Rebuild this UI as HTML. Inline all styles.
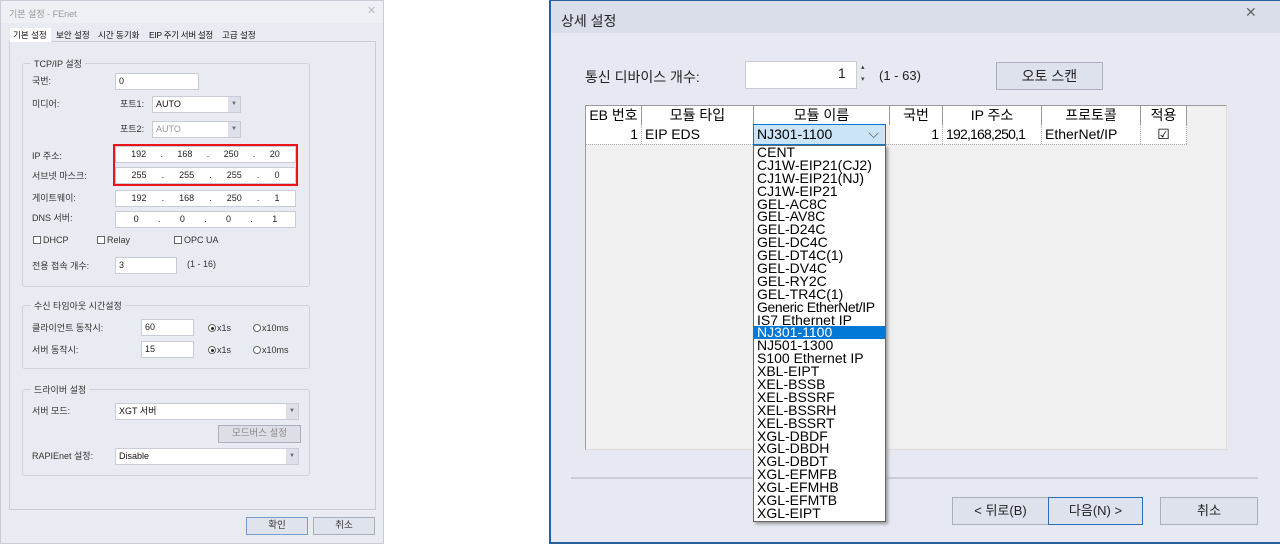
<!DOCTYPE html><html><head><meta charset="utf-8"><style>
*{box-sizing:border-box;margin:0;padding:0}
body{width:1280px;height:544px;background:#fff;position:relative;overflow:hidden;font-family:"Liberation Sans","Noto Sans CJK KR",sans-serif;}
.a{position:absolute}
.l{font-size:9px;color:#333;white-space:nowrap;line-height:11px}
.in{position:absolute;background:#fff;border:1px solid #c8ccd6;font-size:9px;padding:2px 3px;color:#222;line-height:11px}
.grp{position:absolute;border:1px solid #cfd2db;border-radius:3px}
.gt{position:absolute;top:-7px;left:8px;background:#e9ebf2;padding:0 3px;font-size:9px;color:#333}
.sel{position:absolute;background:#fff;border:1px solid #c8ccd6;font-size:9px;padding:2px 3px;color:#111;line-height:11px}
.sel i{position:absolute;right:0;top:0;bottom:0;width:12px;background:#dde0e8;font-style:normal;font-size:6px;text-align:center;line-height:15px;color:#666}
.ip{display:flex;justify-content:space-around;padding:2px 8px}
.btn{position:absolute;background:#dfe3ec;border:1px solid #a9afbd;font-size:9.5px;text-align:center;color:#333}
.R{font-size:14px;color:#222}
.th{position:absolute;top:0;height:19px;border-right:1px solid #999;text-align:center;font-size:14px;line-height:19px;background:#fff}
.td{position:absolute;top:19px;height:19px;border-right:1px dotted #aaa;font-size:14px;line-height:19px;background:#fff;padding:0 3px;white-space:nowrap}
.dd div{height:12.9px;line-height:12.9px;font-size:14px;white-space:nowrap;padding-left:3px;}
.rbtn{position:absolute;background:#dde2ed;border:1px solid #a8aebc;font-size:13px;text-align:center;line-height:26px;color:#222}
.rd{display:inline-block;width:8px;height:8px;border:1px solid #666;border-radius:50%;vertical-align:-1px;margin-right:1px;position:relative;background:#fff}
.rd.on::after{content:"";position:absolute;left:1.5px;top:1.5px;width:3px;height:3px;border-radius:50%;background:#222}
.cb{display:inline-block;width:8px;height:8px;border:1px solid #666;vertical-align:-1px;margin-right:2px;background:#fff}
</style></head><body>
<!-- left dialog -->
<div class="a" style="left:0;top:0;width:384px;height:544px;background:#e9ebf2;border:1px solid #c9ccd6">
 <div class="a" style="left:0;top:0;width:382px;height:22px;background:#eef0f5"></div>
 <div class="a l" style="left:8px;top:8px;color:#999">기본 설정 - FEnet</div>
 <div class="a" style="left:366px;top:3px;color:#bbb;font-size:11px">✕</div>
 <div class="a" style="left:8px;top:40px;width:367px;height:469px;border:1px solid #c9ccd6;background:#e9ebf2"></div>
 <div class="a" style="left:9px;top:27px;width:41px;height:14px;background:#fff"></div>
 <div class="a l" style="left:12px;top:29px;color:#111;font-size:8.5px">기본 설정</div>
 <div class="a l" style="left:55px;top:29px;color:#111;font-size:8.5px">보안 설정</div>
 <div class="a l" style="left:97px;top:29px;color:#111;font-size:8.5px">시간 동기화</div>
 <div class="a l" style="left:148px;top:29px;color:#111;font-size:8.5px;letter-spacing:-0.3px">EIP 주기 서버 설정</div>
 <div class="a l" style="left:221px;top:29px;color:#111;font-size:8.5px">고급 설정</div>

 <div class="grp" style="left:21px;top:62px;width:288px;height:224px"><span class="gt">TCP/IP 설정</span></div>
 <div class="a l" style="left:31px;top:75px">국번:</div>
 <div class="in" style="left:114px;top:72px;width:84px;height:17px">0</div>
 <div class="a l" style="left:31px;top:98px">미디어:</div>
 <div class="a l" style="left:119px;top:98px">포트1:</div>
 <div class="sel" style="left:151px;top:95px;width:89px;height:17px">AUTO<i>▼</i></div>
 <div class="a l" style="left:119px;top:123px">포트2:</div>
 <div class="sel" style="left:151px;top:120px;width:89px;height:17px;color:#999">AUTO<i>▼</i></div>
 <div class="a l" style="left:31px;top:150px">IP 주소:</div>
 <div class="a l" style="left:31px;top:170px">서브넷 마스크:</div>
 <div class="a l" style="left:31px;top:192px">게이트웨이:</div>
 <div class="a l" style="left:31px;top:212px">DNS 서버:</div>
 <div class="in ip" style="left:114px;top:145px;width:181px;height:17px"><span>192</span><span>.</span><span>168</span><span>.</span><span>250</span><span>.</span><span>20</span></div>
 <div class="in ip" style="left:114px;top:166px;width:181px;height:17px"><span>255</span><span>.</span><span>255</span><span>.</span><span>255</span><span>.</span><span>0</span></div>
 <div class="in ip" style="left:114px;top:189px;width:181px;height:17px"><span>192</span><span>.</span><span>168</span><span>.</span><span>250</span><span>.</span><span>1</span></div>
 <div class="in ip" style="left:114px;top:210px;width:181px;height:17px"><span>0</span><span>.</span><span>0</span><span>.</span><span>0</span><span>.</span><span>1</span></div>
 <div class="a" style="left:112px;top:143px;width:185px;height:42px;border:2px solid #e8141a"></div>
 <div class="a l" style="left:32px;top:234px"><span class="cb"></span>DHCP</div>
 <div class="a l" style="left:96px;top:234px"><span class="cb"></span>Relay</div>
 <div class="a l" style="left:173px;top:234px"><span class="cb"></span>OPC UA</div>
 <div class="a l" style="left:31px;top:260px">전용 접속 개수:</div>
 <div class="in" style="left:114px;top:256px;width:62px;height:17px">3</div>
 <div class="a l" style="left:186px;top:258px">(1 - 16)</div>

 <div class="grp" style="left:21px;top:304px;width:288px;height:64px"><span class="gt">수신 타임아웃 시간설정</span></div>
 <div class="a l" style="left:31px;top:322px">클라이언트 동작시:</div>
 <div class="in" style="left:140px;top:318px;width:53px;height:17px">60</div>
 <div class="a l" style="left:207px;top:322px"><span class="rd on"></span>x1s</div>
 <div class="a l" style="left:252px;top:322px"><span class="rd"></span>x10ms</div>
 <div class="a l" style="left:31px;top:344px">서버 동작시:</div>
 <div class="in" style="left:140px;top:340px;width:53px;height:17px">15</div>
 <div class="a l" style="left:207px;top:344px"><span class="rd on"></span>x1s</div>
 <div class="a l" style="left:252px;top:344px"><span class="rd"></span>x10ms</div>

 <div class="grp" style="left:21px;top:388px;width:288px;height:87px"><span class="gt">드라이버 설정</span></div>
 <div class="a l" style="left:31px;top:405px">서버 모드:</div>
 <div class="sel" style="left:114px;top:402px;width:184px;height:17px">XGT 서버<i>▼</i></div>
 <div class="btn" style="left:217px;top:424px;width:83px;height:18px;line-height:16px;color:#888;background:#dcdfe6">모드버스 설정</div>
 <div class="a l" style="left:31px;top:450px">RAPIEnet 설정:</div>
 <div class="sel" style="left:114px;top:447px;width:184px;height:17px">Disable<i>▼</i></div>
 <div class="btn" style="left:245px;top:516px;width:62px;height:18px;line-height:16px;border-color:#7a9cc8">확인</div>
 <div class="btn" style="left:312px;top:516px;width:62px;height:18px;line-height:16px">취소</div>
</div>

<!-- right dialog -->
<div class="a" style="left:549px;top:0;width:731px;height:544px;background:#e6e9f2;border:2px solid #2a5f9e;border-top:1px solid #2a5f9e;border-right:none"></div>
<div class="a" style="left:551px;top:1px;width:729px;height:32px;background:#d9deea"></div>
<div class="a R" style="left:561px;top:11px">상세 설정</div>
<div class="a" style="left:1245px;top:4px;font-size:14px;color:#666">✕</div>
<div class="a R" style="left:585px;top:67px;font-size:14px">통신 디바이스 개수:</div>
<div class="a" style="left:745px;top:61px;width:112px;height:28px;background:#fff;border:1px solid #c8ccd6"></div>
<div class="a R" style="left:838px;top:65px">1</div>
<div class="a" style="left:856px;top:61px;width:1px;height:28px;background:#ccc"></div>
<div class="a" style="left:861px;top:62px;font-size:7px;color:#444;line-height:12px">▴<br>▾</div>
<div class="a R" style="left:879px;top:68px;font-size:13px">(1 - 63)</div>
<div class="rbtn" style="left:996px;top:62px;width:107px;height:28px;font-size:14px">오토 스캔</div>

<div class="a" style="left:585px;top:105px;width:642px;height:345px;background:#f0f0f0;border:1px solid #999;border-right-color:#ddd;border-bottom-color:#ddd">
 <div class="th" style="left:0;width:56px">EB 번호</div>
 <div class="th" style="left:56px;width:112px">모듈 타입</div>
 <div class="th" style="left:168px;width:136px">모듈 이름</div>
 <div class="th" style="left:304px;width:53px">국번</div>
 <div class="th" style="left:357px;width:99px">IP 주소</div>
 <div class="th" style="left:456px;width:99px">프로토콜</div>
 <div class="th" style="left:555px;width:46px">적용</div>
 <div class="td" style="left:0;width:56px;text-align:right">1</div>
 <div class="td" style="left:56px;width:112px">EIP EDS</div>
 <div class="td" style="left:304px;width:53px;text-align:right">1</div>
 <div class="td" style="left:357px;width:99px;letter-spacing:-0.8px">192,168,250,1</div>
 <div class="td" style="left:456px;width:99px">EtherNet/IP</div>
 <div class="td" style="left:555px;width:46px;text-align:center">☑</div>
 <div class="a" style="left:0;top:38px;width:601px;border-top:1px dotted #aaa"></div>
</div>
<div class="a" style="left:571px;top:477px;width:687px;height:2px;background:#c8ccd6"></div>
<div class="a" style="left:753px;top:124px;width:133px;height:21px;background:#cce4f7;border:1px solid #0078d7;font-size:14px;padding:1px 3px">NJ301-1100<span style="position:absolute;right:6px;top:0;color:#555">⌵</span></div>
<div class="a dd" style="left:753px;top:145px;width:133px;height:377px;background:#fff;border:1px solid #666;box-shadow:2px 2px 3px #999;">
<div>CENT</div><div>CJ1W-EIP21(CJ2)</div><div>CJ1W-EIP21(NJ)</div><div>CJ1W-EIP21</div><div>GEL-AC8C</div><div>GEL-AV8C</div><div>GEL-D24C</div><div>GEL-DC4C</div><div>GEL-DT4C(1)</div><div>GEL-DV4C</div><div>GEL-RY2C</div><div>GEL-TR4C(1)</div><div style="letter-spacing:-0.4px">Generic EtherNet/IP</div><div>IS7 Ethernet IP</div><div style="background:#0078d7;color:#fff">NJ301-1100</div><div>NJ501-1300</div><div>S100 Ethernet IP</div><div>XBL-EIPT</div><div>XEL-BSSB</div><div>XEL-BSSRF</div><div>XEL-BSSRH</div><div>XEL-BSSRT</div><div>XGL-DBDF</div><div>XGL-DBDH</div><div>XGL-DBDT</div><div>XGL-EFMFB</div><div>XGL-EFMHB</div><div>XGL-EFMTB</div><div>XGL-EIPT</div>
</div>
<div class="rbtn" style="left:952px;top:497px;width:97px;height:28px">&lt; 뒤로(B)</div>
<div class="rbtn" style="left:1048px;top:497px;width:95px;height:28px;border-color:#2a6fbd">다음(N) &gt;</div>
<div class="rbtn" style="left:1160px;top:497px;width:98px;height:28px">취소</div>
</body></html>
